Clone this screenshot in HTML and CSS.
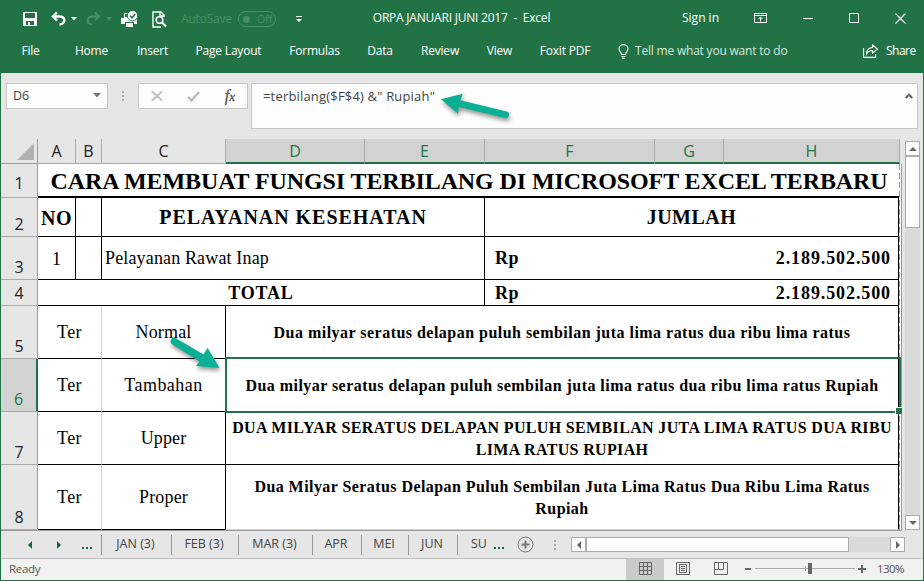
FILE: index.html
```
<!DOCTYPE html>
<html lang="id">
<head>
    <meta charset="UTF-8">
    <meta name="viewport" content="width=device-width, initial-scale=1.0">
    <title>ORPA JANUARI JUNI 2017 - Excel</title>
    <link rel="stylesheet" href="styles.css">
</head>
<body>
    <div class="window">
        <!-- title bar -->
        <header class="titlebar">
            <div class="quick-access">
                <svg class="icon-save" width="14" height="14" viewBox="0 0 14 14"><path fill="#fff" fill-rule="evenodd" d="M0 0h14v14H0zM2 1v5h10V1zM3 9v4h2v-3h2v3h4V9z"/></svg>
                <svg class="icon-undo" width="15" height="14" viewBox="0 0 15 14"><path fill="none" stroke="#fff" stroke-width="2.400" d="M6 .5L2 4.500l4 4M2 4.500h6c7 0 7 7 .5 8"/></svg>
                <svg class="icon-caret" width="6" height="4" viewBox="0 0 6 4"><path fill="#fff" d="M0 0h6L3 3.4z"/></svg>
                <svg class="icon-redo" width="15" height="14" viewBox="0 0 15 14"><path fill="none" stroke="#4a8f68" stroke-width="2" d="M9 .5l4 4-4 4M13 4.500H7C0 4.500 0 11.500 6 12.500"/></svg>
                <svg class="icon-caret" width="6" height="4" viewBox="0 0 6 4"><path fill="#4a8f68" d="M0 0h6L3 3.4z"/></svg>
                <svg class="icon-print" width="17" height="17" viewBox="0 0 17 17">
                    <path fill="#fff" d="M3 2h5v5H3zM0 7h16v6h-3v-2H4v2H0z"/>
                    <path fill="#217346" d="M4 3h3v3H4z"/>
                    <path fill="#fff" d="M5 12h7v4H5z"/>
                    <circle cx="11.500" cy="4.700" r="5.200" fill="#fff" stroke="#217346"/>
                    <path fill="none" stroke="#217346" stroke-width="1.500" d="M9 4.800l2 2L14.300 3"/>
                </svg>
                <svg class="icon-preview" width="15" height="17" viewBox="0 0 15 17">
                    <path fill="none" stroke="#fff" stroke-width="1.400" d="M12 6V4L9 1H1v15h8M8 1v4h4"/>
                    <circle cx="7.500" cy="9" r="3.300" fill="none" stroke="#fff" stroke-width="1.600"/>
                    <path stroke="#fff" stroke-width="2.200" d="M10 11.500l4 4"/>
                </svg>
                <span class="autosave">AutoSave</span>
                <span class="toggle"><i></i>Off</span>
                <svg class="icon-more" width="6" height="7" viewBox="0 0 6 7"><path fill="#fff" d="M0 0h6v1H0zM0 3h6L3 6z"/></svg>
            </div>
            <div class="title">ORPA JANUARI JUNI 2017&nbsp; -&nbsp; Excel</div>
            <div class="window-tools">
                <span class="sign-in">Sign in</span>
                <svg width="13" height="10" viewBox="0 0 13 10"><path fill="none" stroke="#fff" d="M.5.500h12v9H.5zM.5 2.500h12M6.500 8.500V4M4.500 6l2-2 2 2"/></svg>
                <svg width="10" height="10" viewBox="0 0 10 10"><path fill="#fff" d="M0 5h10v1H0z"/></svg>
                <svg width="10" height="10" viewBox="0 0 10 10"><path fill="none" stroke="#fff" d="M.5.500h9v9h-9z"/></svg>
                <svg width="11" height="11" viewBox="0 0 11 11"><path stroke="#fff" stroke-width="1.100" d="M.5.500l10 10M10.500.500l-10 10"/></svg>
            </div>
        </header>

        <!-- ribbon tabs -->
        <nav class="ribbon">
            <span>File</span>
            <span>Home</span>
            <span>Insert</span>
            <span>Page Layout</span>
            <span>Formulas</span>
            <span>Data</span>
            <span>Review</span>
            <span>View</span>
            <span>Foxit PDF</span>
            <div class="tell-me">
                <svg width="11" height="15" viewBox="0 0 11 15"><path fill="none" stroke="#e3f0e8" stroke-width="1.200" d="M3.500 10.500C3.500 8 1 7.500 1 4.800 1 2.500 3 .6 5.500.6S10 2.500 10 4.800c0 2.700-2.500 3.200-2.500 5.700zM3.500 12.500h4M4 14.200h3"/></svg>
                <span class="tell-text">Tell me what you want to do</span>
            </div>
            <div class="share">
                <svg width="16" height="14" viewBox="0 0 16 14"><path fill="none" stroke="#fff" stroke-width="1.100" d="M.6 4v9.400h12V10M9.500 1l5 4-5 4V6.500C7 6.500 5 7.500 3.500 10c0-4 2.500-6.500 6-6.500z"/></svg>
                <span class="share-text">Share</span>
            </div>
        </nav>

        <!-- formula bar -->
        <section class="formula-bar">
            <div class="name-box"><span>D6</span><svg width="8" height="5" viewBox="0 0 8 5"><path fill="#777" d="M0 0h8L4 4.500z"/></svg></div>
            <div class="dots"><i></i><i></i><i></i></div>
            <div class="formula-buttons">
                <svg width="12" height="10" viewBox="0 0 12 10"><path stroke="#bbb" stroke-width="1.800" d="M1 .5l10 9M11 .5l-10 9"/></svg>
                <svg width="13" height="11" viewBox="0 0 13 11"><path fill="none" stroke="#bbb" stroke-width="2.400" d="M1 6l3.500 3.500L12 1"/></svg>
                <span class="fx">f<small>x</small></span>
            </div>
            <div class="formula-input">
                <span class="formula-text">=terbilang($F$4) &amp;" Rupiah"</span>
                <svg width="8" height="6" viewBox="0 0 8 6"><path fill="none" stroke="#666" stroke-width="2" d="M.7 5L4 1.700 7.300 5"/></svg>
            </div>
        </section>

        <!-- worksheet -->
        <main class="workspace">
            <div class="sheet">
                <div class="corner"><svg width="17" height="17" viewBox="0 0 17 17"><path fill="#b2b2b2" d="M17 0v17H0z"/></svg></div>
                <div class="col-head">A</div>
                <div class="col-head">B</div>
                <div class="col-head">C</div>
                <div class="col-head active">D</div>
                <div class="col-head active">E</div>
                <div class="col-head active">F</div>
                <div class="col-head active">G</div>
                <div class="col-head active">H</div>

                <div class="row-head first">1</div>
                <div class="cell a-h heading"><span>CARA MEMBUAT FUNGSI TERBILANG DI MICROSOFT EXCEL TERBARU</span></div>

                <div class="row-head">2</div>
                <div class="cell label no">NO</div>
                <div class="cell"></div>
                <div class="cell c-e label"><span class="pelayanan">PELAYANAN KESEHATAN</span></div>
                <div class="cell f-h label"><span class="jumlah">JUMLAH</span></div>

                <div class="row-head">3</div>
                <div class="cell number">1</div>
                <div class="cell"></div>
                <div class="cell c-e left">Pelayanan Rawat Inap</div>
                <div class="cell f-h money"><span>Rp</span><span class="amount">2.189.502.500</span></div>

                <div class="row-head">4</div>
                <div class="cell a-e total">TOTAL</div>
                <div class="cell f-h money total-money"><span>Rp</span><span class="amount">2.189.502.500</span></div>

                <div class="row-head">5</div>
                <div class="cell a-b">Ter</div>
                <div class="cell">Normal</div>
                <div class="cell d-h words"><span class="normal">Dua milyar seratus delapan puluh sembilan juta lima ratus dua ribu lima ratus</span></div>

                <div class="row-head active">6</div>
                <div class="cell a-b">Ter</div>
                <div class="cell tambahan">Tambahan</div>
                <div class="cell d-h words selected"><span class="extra">Dua milyar seratus delapan puluh sembilan juta lima ratus dua ribu lima ratus Rupiah</span></div>

                <div class="row-head">7</div>
                <div class="cell a-b">Ter</div>
                <div class="cell">Upper</div>
                <div class="cell d-h words"><span class="upper">DUA MILYAR SERATUS DELAPAN PULUH SEMBILAN JUTA LIMA RATUS DUA RIBU<br>LIMA RATUS RUPIAH</span></div>

                <div class="row-head">8</div>
                <div class="cell a-b">Ter</div>
                <div class="cell">Proper</div>
                <div class="cell d-h words last"><span class="proper">Dua Milyar Seratus Delapan Puluh Sembilan Juta Lima Ratus Dua Ribu Lima Ratus<br>Rupiah</span></div>
                <div class="page-break"></div>
            </div>
            <div class="vscroll">
                <div class="scroll-btn"><svg width="8" height="4" viewBox="0 0 8 4"><path fill="#666" d="M4 0l4 4H0z"/></svg></div>
                <div class="vthumb"></div>
                <div class="scroll-btn bottom"><svg width="8" height="4" viewBox="0 0 8 4"><path fill="#666" d="M0 0h8L4 4z"/></svg></div>
            </div>
        </main>

        <!-- sheet tabs -->
        <div class="tabs-bar">
            <div class="tab-nav">
                <svg width="4" height="8" viewBox="0 0 4 8"><path fill="#0f6b3a" d="M4 0v8L0 4z"/></svg>
                <svg width="4" height="8" viewBox="0 0 4 8"><path fill="#0f6b3a" d="M0 0v8l4-4z"/></svg>
                <span class="ellipsis"><i></i><i></i><i></i></span>
            </div>
            <div class="tabs">
                <span>JAN (3)</span>
                <span>FEB (3)</span>
                <span>MAR (3)</span>
                <span>APR</span>
                <span>MEI</span>
                <span>JUN</span>
                <span class="cut">SU</span>
            </div>
            <span class="ellipsis"><i></i><i></i><i></i></span>
            <svg class="add-sheet" width="17" height="17" viewBox="0 0 17 17"><circle cx="8.500" cy="8.500" r="7.500" fill="none" stroke="#777"/><path stroke="#777" stroke-width="2" d="M8.500 4.500v8M4.500 8.500h8"/></svg>
            <div class="dots"><i></i><i></i><i></i></div>
            <div class="hscroll">
                <div class="scroll-btn"><svg width="4" height="8" viewBox="0 0 4 8"><path fill="#666" d="M4 0v8L0 4z"/></svg></div>
                <div class="hthumb"></div>
                <div class="scroll-btn right"><svg width="4" height="8" viewBox="0 0 4 8"><path fill="#666" d="M0 0v8l4-4z"/></svg></div>
            </div>
        </div>

        <!-- status bar -->
        <footer class="status">
            <span class="ready">Ready</span>
            <div class="view active"><svg width="13" height="13" viewBox="0 0 13 13"><path fill="none" stroke="#666" d="M.5.500h12v12H.5zM4.500 0v13M8.500 0v13M0 4.500h13M0 8.500h13"/></svg></div>
            <div class="view"><svg width="14" height="13" viewBox="0 0 14 13"><path fill="none" stroke="#666" d="M.5.500h13v12H.5zM3.500 2.500h7v8h-7zM5 4.500h4M5 6.500h4M5 8.500h4"/></svg></div>
            <div class="view"><svg width="14" height="13" viewBox="0 0 14 13"><path fill="none" stroke="#666" d="M.5.500h13v12H.5zM0 7.500h9.500V0M4.500 0v7.500"/></svg></div>
            <div class="zoom">
                <i class="minus"></i>
                <div class="track"><i class="tick"></i><i class="knob"></i></div>
                <svg width="8" height="8" viewBox="0 0 8 8"><path stroke="#666" stroke-width="2" d="M4 0v8M0 4h8"/></svg>
                <span class="percent">130%</span>
            </div>
        </footer>

        <!-- pointer arrows -->
        <svg class="arrow arrow-formula" width="80" height="40" viewBox="0 0 80 40"><path fill="#0bb094" d="M3 11.300L24.700 5.800 22.500 12.300 68.500 23.500A3.300 3.300 0 0 1 67 30L20.800 18.900 20 25.700z"/></svg>
        <svg class="arrow arrow-cell" width="60" height="45" viewBox="0 0 60 45"><path fill="#0bb094" d="M51.500 35L28 33 31.500 28.500 4.500 11.500A3.400 3.400 0 0 1 8 5.200L35.500 21.500 39.500 14.700z"/></svg>
    </div>
</body>
</html>
```
FILE: styles.css
```
:root {
    --green: #217346;
    --panel: #e6e6e6;
    --line: #ababab;
    --ui-font: "Open Sans", "Noto Sans", sans-serif;
}

* {
    box-sizing: border-box;
}

body {
    margin: 0;
    font-family: var(--ui-font);
    font-size: 12px;
    overflow: hidden;
}

svg {
    display: block;
    flex-shrink: 0;
}

.window {
    position: relative;
    display: flex;
    flex-direction: column;
    width: 924px;
    height: 581px;
    border: 1px solid var(--green);
    background: var(--panel);
}

/* title bar */
.titlebar {
    display: grid;
    grid-template-columns: 350px 221px 1fr;
    height: 34px;
    background: var(--green);
    color: #fff;
    line-height: 34px;
}

.quick-access {
    display: flex;
    align-items: center;
    padding-left: 22px;
}

.icon-undo {
    margin: 0 5px 0 14px;
}

.icon-redo {
    margin: 0 5px 0 9px;
}

.icon-print {
    margin-left: 9px;
}

.icon-preview {
    margin-left: 14px;
}

.autosave {
    width: 50px;
    margin-left: 14px;
    color: #4a8f68;
    letter-spacing: -0.2px;
}

.toggle {
    display: flex;
    align-items: center;
    width: 38px;
    height: 16px;
    margin-left: 7px;
    padding-left: 4px;
    border: 1px solid #4a8f68;
    border-radius: 8px;
    color: #4a8f68;
    font-size: 10.5px;
}

.toggle i {
    width: 7px;
    height: 7px;
    margin-right: 7px;
    border-radius: 50%;
    background: #4a8f68;
}

.icon-more {
    margin-left: 20px;
}

.title {
    text-align: center;
    white-space: nowrap;
    letter-spacing: -0.22px;
}

.window-tools {
    display: flex;
    align-items: center;
    padding: 0 0 2px 110px;
}

.window-tools svg {
    margin-right: 36px;
}

.sign-in {
    width: 72px;
}

/* ribbon tabs */
.ribbon {
    display: grid;
    grid-template-columns: 59px 63px 59px 93px 79px 52px 68px 51px 80px 1fr 61px;
    height: 38px;
    background: var(--green);
    color: #fff;
    line-height: 32px;
    text-align: center;
    letter-spacing: -0.2px;
    white-space: nowrap;
}

.tell-me,
.share {
    display: flex;
    height: 32px;
    align-items: center;
    gap: 6px;
}

.tell-me {
    padding-left: 13px;
    color: #d5e6dc;
}

.share {
    gap: 7px;
    padding-left: 1px;
    letter-spacing: -0.5px;
}

/* formula bar */
.formula-bar {
    display: flex;
    align-items: flex-start;
    height: 66px;
    padding: 10px 5px 0;
    color: #444;
}

.name-box,
.formula-buttons,
.formula-input {
    display: flex;
    background: #fdfdfd;
    border: 1px solid #c6c6c6;
}

.name-box {
    width: 102px;
    height: 26px;
    padding: 0 6px 1px;
    align-items: center;
    justify-content: space-between;
    font-size: 12.5px;
}

.dots {
    display: flex;
    flex-direction: column;
    gap: 2px;
}

.dots i {
    width: 2px;
    height: 2px;
    background: #a6a6a6;
}

.formula-bar .dots {
    margin: 8px 14px 0;
}

.formula-buttons {
    width: 110px;
    height: 26px;
    padding: 0 12px;
    align-items: center;
    justify-content: space-between;
}

.fx {
    font: italic 16px/20px "Liberation Serif", serif;
    color: #555;
    -webkit-text-stroke: 0.3px #555;
}

.fx small {
    font-size: 13px;
}

.formula-input {
    flex: 1;
    height: 46px;
    margin-left: 3px;
    padding: 0 4px 0 11px;
    justify-content: space-between;
    font-size: 13px;
    line-height: 24px;
    letter-spacing: 0.18px;
}

.formula-input svg {
    margin-top: 9px;
}

/* worksheet */
.workspace {
    display: flex;
    height: 392px;
}

.sheet {
    position: relative;
    display: grid;
    grid-template-columns: 37px 38px 26px 124px 139px 120px 170px 69px 176px;
    grid-template-rows: 25px 34px 39px 43px 26px 53px 53px 53px 65px;
    width: 901px;
    border-bottom: 1px solid #9b9b9b;
}

.corner,
.col-head,
.row-head {
    border: 0 solid var(--line);
    border-right-width: 1px;
    border-bottom-width: 1px;
    color: #222;
}

.corner {
    padding: 4px 3px 0 0;
    display: flex;
    justify-content: flex-end;
    border-color: #9b9b9b;
}

.col-head {
    font-size: 16px;
    line-height: 24px;
    text-align: center;
}

.col-head.active {
    background: #d2d2d2;
    border-bottom: 2px solid var(--green);
    color: var(--green);
}

.row-head {
    display: flex;
    align-items: flex-end;
    justify-content: center;
    padding-bottom: 1px;
    font-size: 16px;
    line-height: 22px;
    border-right-color: #9b9b9b;
}

.row-head.first {
    padding-bottom: 3px;
}

.row-head.active {
    background: #d2d2d2;
    border-right: 2px solid var(--green);
    color: var(--green);
}

.cell {
    display: flex;
    align-items: center;
    justify-content: center;
    background: #fff;
    border: 0 solid #000;
    border-right-width: 1px;
    border-bottom-width: 1px;
    color: #000;
    font-family: "Liberation Serif", serif;
    font-size: 18px;
    letter-spacing: 0.15px;
    white-space: nowrap;
    text-align: center;
}

.a-h { grid-column: 2 / 10; }
.a-e { grid-column: 2 / 7; }
.a-b { grid-column: 2 / 4; border-right-color: #d4d4d4; }
.c-e { grid-column: 4 / 7; }
.d-h { grid-column: 5 / 10; margin-right: 1px; }
.f-h { grid-column: 7 / 10; margin-right: 1px; }

.a-b,
.tambahan {
    letter-spacing: 0.45px;
}

.heading {
    padding-top: 2px;
    border-right: 0;
    border-bottom-width: 2px;
    font-size: 24px;
    font-weight: bold;
    letter-spacing: -0.1px;
}

.label {
    font-size: 20px;
    font-weight: bold;
    letter-spacing: 0.5px;
}

.no,
.number {
    padding-top: 2px;
}

.pelayanan {
    letter-spacing: 0.95px;
}

.left {
    justify-content: flex-start;
    padding-left: 3px;
}

.total {
    padding-top: 2px;
    font-weight: bold;
    letter-spacing: 0.8px;
}

.money {
    justify-content: space-between;
    padding: 0 7px 0 10px;
    font-weight: bold;
    letter-spacing: 0.5px;
}

.total-money {
    padding-top: 2px;
}

.amount {
    letter-spacing: 0.9px;
}

.words {
    padding-top: 2px;
    font-size: 16px;
    font-weight: bold;
    line-height: 22px;
}

.normal { letter-spacing: 0.475px; }
.extra { letter-spacing: 0.455px; }
.upper { letter-spacing: 0.345px; }
.proper { letter-spacing: 0.43px; }

.words.last {
    border-bottom-color: #d4d4d4;
}

/* green frame drawn over the cell borders, with its fill handle */
.selected {
    position: relative;
}

.selected::before {
    content: '';
    position: absolute;
    inset: -2px -3px -2px -1px;
    border: 2px solid var(--green);
    z-index: 1;
}

.selected::after {
    content: '';
    position: absolute;
    right: -4px;
    bottom: -3px;
    width: 6px;
    height: 6px;
    background: var(--green);
    border: 1px solid #fff;
    border-width: 1px 0 0 1px;
    z-index: 2;
}

.page-break {
    position: absolute;
    top: 25px;
    bottom: 0;
    right: 0;
    width: 3px;
    border-right: 1px solid #9b9b9b;
    background: repeating-linear-gradient(#999 0 6px, #fff 6px 9px) 0 0 / 1px 100% no-repeat #fff;
}

.vscroll {
    display: flex;
    flex-direction: column;
    width: 15px;
    margin: 2px 0 0 3px;
    height: 389px;
    background: #dadada;
}

.scroll-btn {
    display: flex;
    align-items: center;
    justify-content: center;
    width: 15px;
    height: 15px;
    flex-shrink: 0;
    background: #fff;
    border: 1px solid var(--line);
}

.scroll-btn.bottom {
    margin-top: auto;
}

.vthumb {
    height: 72px;
    background: #fff;
    border: 1px solid var(--line);
}

/* sheet tabs */
.tabs-bar {
    display: flex;
    align-items: center;
    height: 28px;
    border-bottom: 1px solid #c0c0c0;
}

.tab-nav {
    display: flex;
    align-items: center;
    width: 100px;
    padding-left: 27px;
}

.tab-nav svg + svg {
    margin: 0 21px 0 25px;
}

.ellipsis {
    display: flex;
    gap: 2px;
    padding-top: 7px;
}

.ellipsis i {
    width: 2px;
    height: 2px;
    background: #0f6b3a;
}

.tabs {
    display: grid;
    grid-template-columns: 70px 67px 74px 49px 47px 49px 29px;
    color: #444;
    font-size: 12.5px;
    line-height: 18px;
    text-align: center;
}

.tabs span {
    height: 20px;
    padding-right: 2px;
    border-left: 1px solid #999;
    overflow: hidden;
}

.tabs .cut {
    padding-left: 13px;
    padding-right: 0;
    text-align: left;
}

.tabs + .ellipsis {
    margin-left: 8px;
}

.add-sheet {
    margin-left: 13px;
}

.tabs-bar .dots {
    margin-left: 20px;
}

.hscroll {
    display: flex;
    width: 334px;
    margin-left: 15px;
    background: #dadada;
}

.hthumb {
    width: 263px;
    background: #fff;
    border: 1px solid var(--line);
}

.scroll-btn.right {
    margin-left: auto;
}

/* status bar */
.status {
    display: flex;
    align-items: center;
    flex: 1;
    background: #f1f1f1;
    color: #555;
    font-size: 11.5px;
}

.ready {
    width: 625px;
    padding: 0 0 3px 8px;
    letter-spacing: -0.3px;
}

.view {
    display: flex;
    align-items: center;
    justify-content: center;
    width: 38px;
    height: 100%;
    padding-bottom: 2px;
}

.view.active {
    background: #cacaca;
}

.zoom {
    display: flex;
    align-items: center;
    padding: 0 0 2px 5px;
}

.minus {
    width: 6px;
    height: 2px;
    background: #666;
}

.track {
    display: flex;
    align-items: center;
    width: 100px;
    height: 12px;
    margin: 0 3px 0 4px;
    padding-left: 50px;
    background: linear-gradient(#aaa, #aaa) 0 50% / 100% 1px no-repeat;
}

.tick {
    width: 1px;
    height: 5px;
    background: #aaa;
}

.knob {
    width: 4px;
    height: 11px;
    margin-left: 2px;
    background: #666;
}

.percent {
    margin-left: 11px;
    letter-spacing: -0.6px;
}

/* pointer arrows */
.arrow {
    position: absolute;
    z-index: 5;
    filter: drop-shadow(1px 3px 2px rgba(0, 0, 0, 0.4));
}

.arrow-formula {
    left: 437px;
    top: 87px;
}

.arrow-cell {
    left: 167px;
    top: 332px;
}
```
